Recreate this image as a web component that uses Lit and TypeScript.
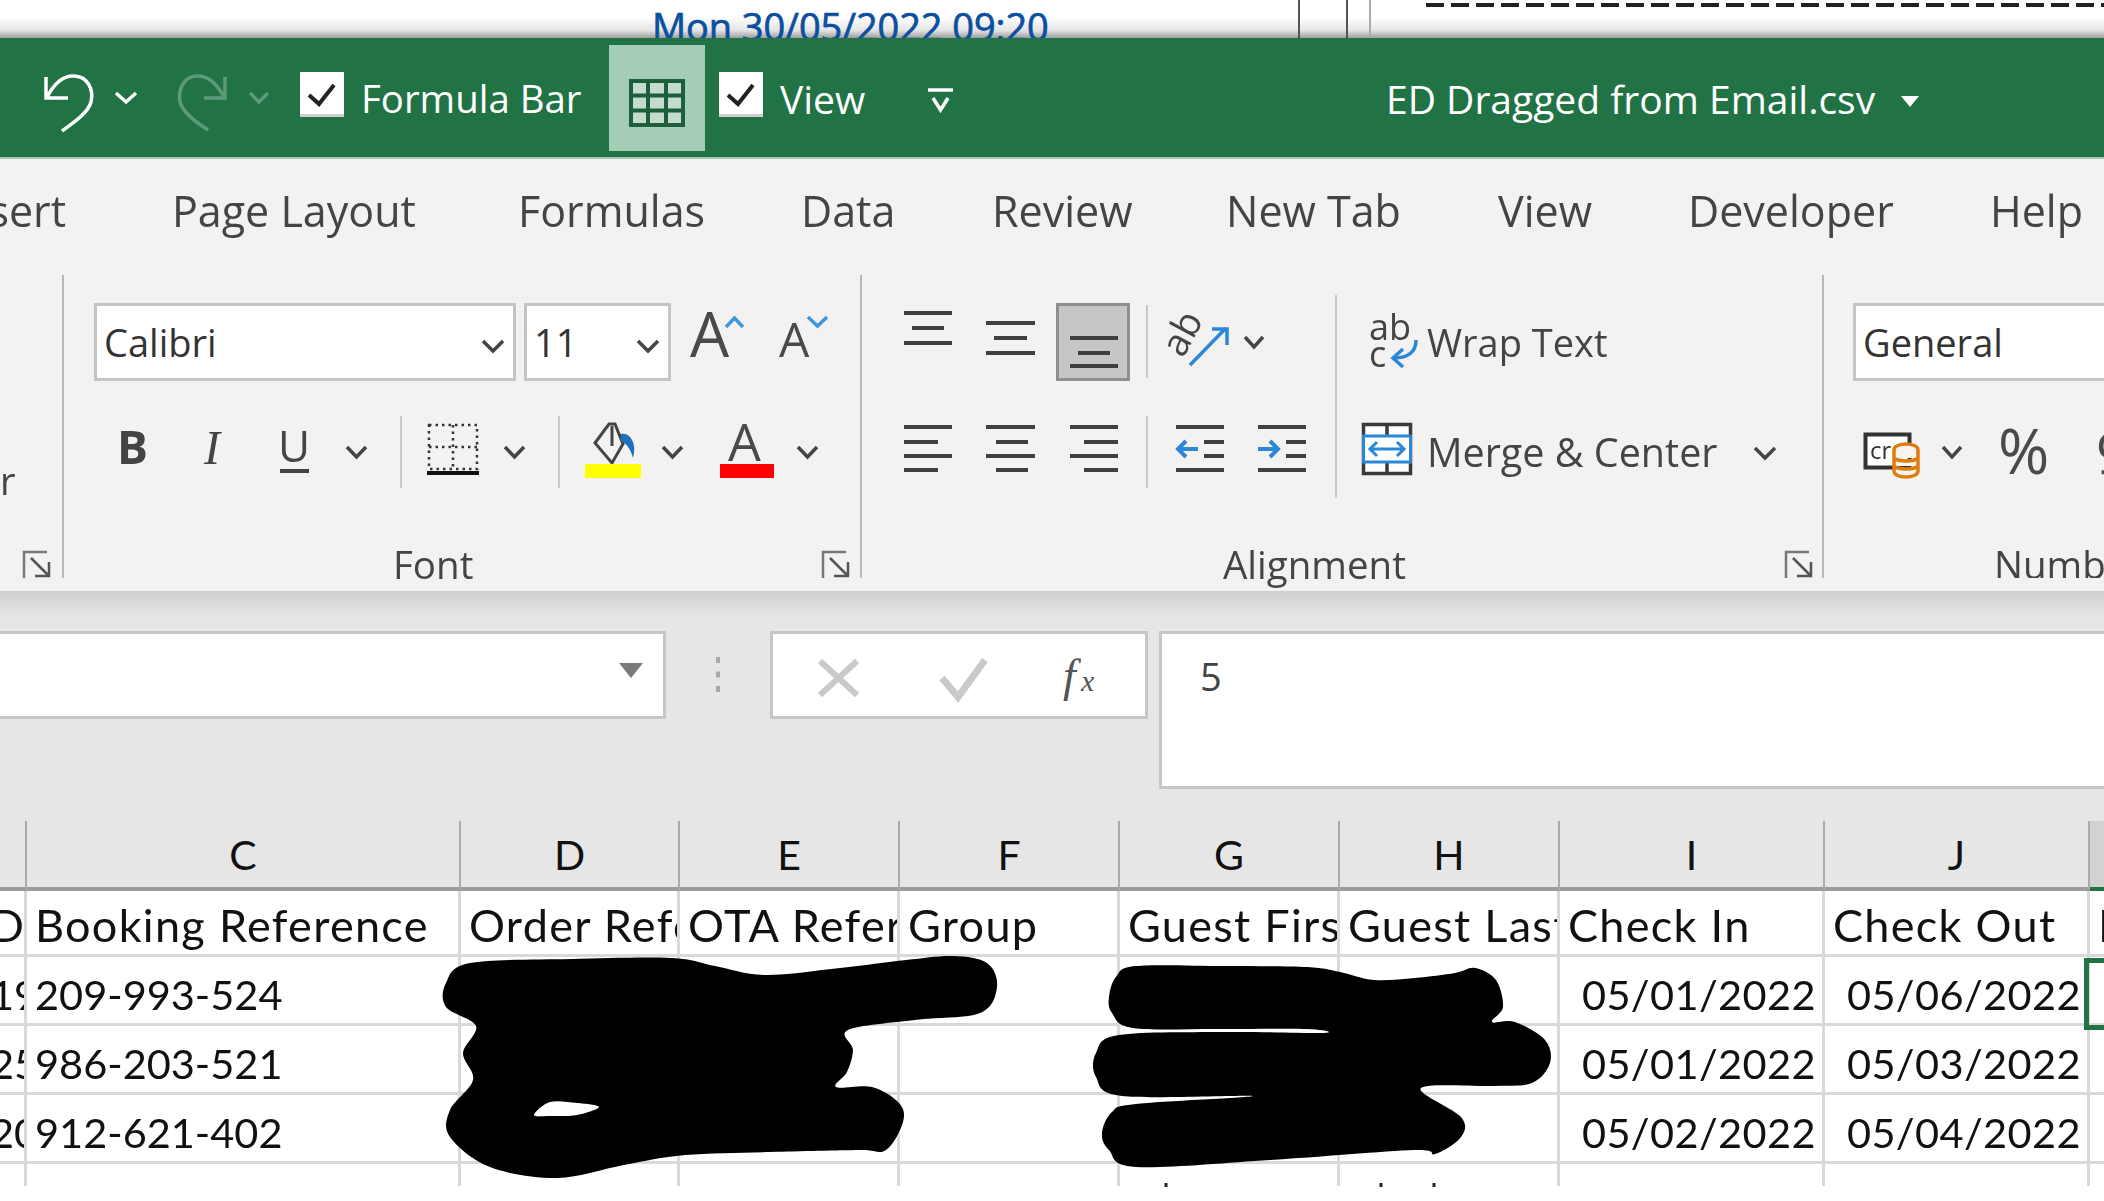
import { LitElement, html, css, svg, TemplateResult } from "lit";
import { customElement } from "lit/decorators.js";

type Slot = { x: number; w: number; t: unknown; c?: string };

const row = (origin: number, items: Slot[], cls = "") => {
  let end = origin;
  return html`<div class="row ${cls}">${items.map((i) => {
    const m = i.x - end;
    end = i.x + i.w;
    return html`<div class="slot ${i.c ?? ""}" style="margin-left:${m}px;width:${i.w}px">${i.t}</div>`;
  })}</div>`;
};

const ic = (x: number, w: number, y: number, h: number, c: unknown) =>
  svg`<svg class="ic" width=${w} height=${h} viewBox="${x} ${y} ${w} ${h}">${c}</svg>`;

const R1 = [303, 78] as const;
const R2 = [416, 72] as const;
const R3 = [544, 40] as const;

const chev = (a: number, b: number, y1: number, y2: number, col = "#444", sw = 3.5) =>
  svg`<polyline points="${a},${y1} ${(a + b) / 2},${y2} ${b},${y1}" fill="none" stroke=${col} stroke-width=${sw}/>`;

const lines = (ls: [number, number, number][], col = "#3f3f3f") =>
  ls.map(([a, b, y]) => svg`<line x1=${a} x2=${b} y1=${y} y2=${y} stroke=${col} stroke-width="4"/>`);

const sep = (x: number, y1: number, y2: number) =>
  svg`<line x1=${x} x2=${x} y1=${y1} y2=${y2} stroke="#c8c8c8" stroke-width="2"/>`;

const launcher = (x: number) => svg`
  <path d="M${x + 1} 578V552H${x + 24}" fill="none" stroke="#777" stroke-width="2.5"/>
  <path d="M${x + 8} 558L${x + 26} 576M${x + 26} 562V576H${x + 12}" fill="none" stroke="#555" stroke-width="2.5"/>`;

const check = (dx: number) => svg`
  <rect x=${300 + dx} y="72" width="44" height="45" fill="#fff"/>
  <rect x=${300 + dx} y="114" width="44" height="3" fill="#cfcfcf"/>
  <polyline points="${309 + dx},95 ${319 + dx},104 ${334 + dx},85" fill="none" stroke="#222" stroke-width="4"/>`;

const comboChev = () => ic(0, 22, 0, 14, chev(1, 21, 2, 12, "#444", 3.5));

/* closed Catmull-Rom spline through page coordinates */
const blob = (p: [number, number][]) => {
  const n = p.length;
  let d = `M${p[0][0]} ${p[0][1]}`;
  for (let i = 0; i < n; i++) {
    const a = p[(i - 1 + n) % n], b = p[i], c = p[(i + 1) % n], e = p[(i + 2) % n];
    const k = 6;
    d += `C${b[0] + (c[0] - a[0]) / k} ${b[1] + (c[1] - a[1]) / k} ${c[0] - (e[0] - b[0]) / k} ${c[1] - (e[1] - b[1]) / k} ${c[0]} ${c[1]}`;
  }
  return d + "Z";
};

const blobA: [number, number][] = [[470,963],[571,959],[671,958],[715,966],[765,975],[840,968],[906,960],[953,956],[987,963],[997,987],[980,1013],[915,1020],[848,1030],[853,1050],[847,1072],[836,1087],[872,1087],[899,1103],[903,1122],[886,1150],[859,1150],[770,1152],[685,1155],[624,1165],[557,1178],[490,1167],[450,1137],[450,1110],[473,1080],[463,1053],[476,1026],[446,1007],[446,983]];
const holeA: [number, number][] = [[534,1115],[550,1102],[577,1103],[599,1107],[577,1115],[550,1116]];
const blobB: [number, number][] = [[1136,966],[1225,966],[1307,967],[1340,972],[1374,980],[1415,978],[1455,973],[1475,968],[1496,980],[1503,1007],[1492,1022],[1515,1022],[1545,1040],[1550,1063],[1532,1083],[1495,1086],[1421,1088],[1461,1117],[1461,1137],[1435,1154],[1414,1150],[1270,1160],[1136,1167],[1109,1150],[1102,1133],[1112,1112],[1136,1104],[1253,1096],[1122,1096],[1096,1077],[1096,1053],[1119,1035],[1230,1032],[1324,1033],[1307,1029],[1220,1029],[1133,1028],[1112,1013],[1109,997],[1116,977]];

const cols = ["C", "D", "E", "F", "G", "H", "I", "J"];
const heads = ["Booking Reference", "Order Reference", "OTA Reference", "Group", "Guest First Name", "Guest Last Name", "Check In", "Check Out"];
const data = [
  ["19", "209-993-524", "05/01/2022", "05/06/2022"],
  ["25", "986-203-521", "05/01/2022", "05/03/2022"],
  ["20", "912-621-402", "05/02/2022", "05/04/2022"],
  ["", "", "05/03/2022", "05/05/2022"],
];

@customElement("app-root")
export class AppRoot extends LitElement {
  static styles = css`
    :host { display: block; position: relative; width: 2104px; height: 1201px; overflow: hidden; background: #fff; font-family: "Open Sans", "Noto Sans", sans-serif; color: #444; }
    .soft { filter: blur(0.7px); }
    .row { display: flex; align-items: center; }
    .slot { flex: none; display: flex; align-items: center; white-space: nowrap; }
    .ic { display: block; overflow: visible; flex: none; }
    .strip { height: 38px; display: flex; position: relative; overflow: hidden; background: linear-gradient(#fff 0, #fff 45%, #e4e4e4 80%, #9e9e9e 100%); }
    .stamp { flex: none; width: 398px; margin-left: 652px; margin-top: 4px; font: 38px/44px "Open Sans", sans-serif; color: #0b4fa0; -webkit-text-stroke: 0.7px #0b4fa0; letter-spacing: -0.1px; white-space: nowrap; }
    .v1 { flex: none; width: 2px; background: #555; }
    .dash { height: 4px; flex: 1; margin-top: 3px; background: repeating-linear-gradient(90deg, #222 0 18px, transparent 18px 25px); }
    .title { height: 121px; box-sizing: border-box; padding-top: 7px; background: #217346; border-bottom: 2px solid #a9c9b6; color: #fff; font-size: 39px; }
    .fbar { font-size: 38.4px; }
    .sel { background: #a3cdb5; height: 106px; }
    .ribbon { background: #f3f2f1; height: 432px; font-size: 38px; }
    .tabs { height: 102px; font-size: 43px; }
    .right { justify-content: flex-end; }
    .groups { display: flex; margin-top: 14px; }
    .group { height: 303px; box-sizing: border-box; border-right: 2px solid #b9b9b9; flex: none; overflow: visible; }
    .g1 { width: 64px; } .g2 { width: 798px; } .g3 { width: 962px; } .g4 { width: 280px; border-right: 0; overflow: hidden; }
    .r1 { height: 78px; margin-top: 28px; }
    .r2 { height: 72px; margin-top: 35px; }
    .r3 { height: 40px; margin-top: 56px; font-size: 38.5px; }
    .box { height: 78px; box-sizing: border-box; background: #fff; border: 3px solid #c4c4c4; padding: 0 9px 0 7px; color: #333; justify-content: space-between; }
    .box .ic { margin-top: 8px; }
    .box.open { border-right: 0; }
    .merge { font-size: 39.5px; }
    .fx { height: 230px; box-sizing: border-box; padding-top: 40px; background: linear-gradient(#cfcfcf 0, #e6e6e6 26px); align-items: flex-start; }
    .fbox { height: 88px; box-sizing: border-box; background: #fff; border: 3px solid #c6c6c6; }
    .fin { height: 158px; box-sizing: border-box; background: #fff; border: 3px solid #c6c6c6; border-right: 0; padding: 17px 0 0 38px; align-items: flex-start; font-size: 38px; line-height: 50px; color: #444; }
    .sheet { height: 365px; overflow: hidden; font-family: Lato, "Open Sans", sans-serif; color: #111; }
    .grid { display: grid; grid-template-columns: 27px 434px 219px 220px 220px 220px 220px 265px 265px 14px; }
    .hd { height: 70px; box-sizing: border-box; background: #e6e6e6; border-right: 2px solid #ababab; border-bottom: 4px solid #9c9c9c; display: flex; align-items: center; justify-content: center; font-size: 41px; padding-top: 1px; }
    .hd.last { background: #d2d2d2; border-right: 0; border-bottom-color: #217346; }
    .c { height: 69px; box-sizing: border-box; border-right: 3px solid #d9d9d9; border-bottom: 3px solid #d9d9d9; font-size: 45px; letter-spacing: 1.3px; line-height: 58px; padding: 0 0 0 8px; white-space: nowrap; overflow: hidden; display: flex; align-items: flex-end; }
    .n { font-size: 41.5px; letter-spacing: 0; }
    .first { height: 66px; }
    .num { justify-content: flex-end; padding: 0 6px 0 0; letter-spacing: 0.4px; }
    .stub { padding: 0; }
    .stub span { margin-left: -10px; }
    .stubr { justify-content: flex-end; letter-spacing: 0; }
    .end { border-right: 0; }
    .active { position: absolute; left: 2084px; top: 958px; width: 40px; height: 72px; box-sizing: border-box; border: 5px solid #217346; }
    .ink { position: absolute; left: 0; top: 0; }
  `;

  render(): TemplateResult {
    const [y1, h1] = R1, [y2, h2] = R2, [y3, h3] = R3;
    return html`
    <div class="soft">
      <div class="strip">
        <div class="stamp">Mon 30/05/2022 09:20</div>
        <div class="v1" style="margin-left:${1298 - 1050}px"></div>
        <div class="v1" style="margin-left:46px"></div>
        <div class="v1" style="margin-left:21px;background:#aaa"></div>
        <div class="dash" style="margin-left:55px"></div>
      </div>

      <div class="title">
        ${row(0, [
          { x: 44, w: 52, t: ic(44, 52, 45, 106, svg`<path d="M46 77V98H68M47 97C55 82 65 75 75 76C88 77 94 90 91 102C88 113 74 122 62 131" fill="none" stroke="#fff" stroke-width="3.5"/>`) },
          { x: 114, w: 24, t: ic(114, 24, 45, 106, chev(116, 136, 93, 102, "#fff")) },
          { x: 178, w: 52, t: ic(178, 52, 45, 106, svg`<path d="M225 77V98H204M224 97C216 82 206 75 196 76C183 77 178 90 180 102C183 113 196 122 208 130" fill="none" stroke="#5d9a7b" stroke-width="3.5"/>`) },
          { x: 248, w: 24, t: ic(248, 24, 45, 106, chev(250, 268, 93, 102, "#5d9a7b")) },
          { x: 300, w: 44, t: ic(300, 44, 45, 106, check(0)) },
          { x: 361, w: 230, c: "fbar", t: "Formula Bar" },
          { x: 609, w: 96, c: "sel", t: ic(609, 96, 45, 106, svg`
            <rect x="631" y="81" width="52" height="44" fill="#c3dccd" stroke="#1d5f3b" stroke-width="4"/>
            <path d="M648 80V126M666 80V126M630 95.5H684M630 110.5H684" stroke="#1d5f3b" stroke-width="4"/>`) },
          { x: 719, w: 44, t: ic(719, 44, 45, 106, check(419)) },
          { x: 780, w: 100, t: "View" },
          { x: 928, w: 26, t: ic(928, 26, 45, 106, svg`<path d="M928 90H953" stroke="#fff" stroke-width="3.5"/>${chev(933, 948, 98, 110, "#fff", 3.5)}`) },
          { x: 1386, w: 500, t: "ED Dragged from Email.csv" },
          { x: 1901, w: 18, t: ic(1901, 18, 45, 106, svg`<path d="M1901 96H1919L1910 107Z" fill="#fff"/>`) },
        ])}
      </div>

      <div class="ribbon">
        ${row(0, [
          { x: 0, w: 66, c: "right", t: "sert" },
          { x: 172, w: 260, t: "Page Layout" },
          { x: 518, w: 200, t: "Formulas" },
          { x: 801, w: 110, t: "Data" },
          { x: 992, w: 150, t: "Review" },
          { x: 1226, w: 190, t: "New Tab" },
          { x: 1498, w: 100, t: "View" },
          { x: 1688, w: 220, t: "Developer" },
          { x: 1990, w: 90, t: "Help" },
        ], "tabs")}
        <div class="groups">
          <div class="group g1">
            ${row(0, [{ x: 0, w: 12, t: "" }], "r1")}
            ${row(0, [{ x: 0, w: 14, t: ic(0, 14, y2, h2, svg`<text x="0" y="495" font-size="38" fill="#444" font-family="Open Sans">r</text>`) }], "r2")}
            ${row(0, [{ x: 22, w: 32, t: ic(22, 32, y3, h3, launcher(23)) }], "r3")}
          </div>

          <div class="group g2">
            ${row(63, [
              { x: 93, w: 422, c: "box", t: html`<span>Calibri</span>${comboChev()}` },
              { x: 523, w: 147, c: "box", t: html`<span>11</span>${comboChev()}` },
              { x: 692, w: 52, t: ic(692, 52, y1, h1, svg`
                <text x="689" y="357" font-size="62" fill="#4a4a4a" font-family="Open Sans">A</text>
                ${chev(725, 742, 327, 318, "#3f97d8")}`) },
              { x: 780, w: 48, t: ic(780, 48, y1, h1, svg`
                <text x="778" y="357" font-size="48" fill="#4a4a4a" font-family="Open Sans">A</text>
                ${chev(807, 826, 317, 326, "#3f97d8")}`) },
            ], "r1")}
            ${row(63, [
              { x: 119, w: 26, t: ic(119, 26, y2, h2, svg`<text x="116" y="464" font-size="46" font-weight="700" fill="#444" font-family="Open Sans">B</text>`) },
              { x: 204, w: 24, t: ic(204, 24, y2, h2, svg`<text x="203" y="464" font-size="48" font-style="italic" fill="#444" font-family="Liberation Serif">I</text>`) },
              { x: 278, w: 32, t: ic(278, 32, y2, h2, svg`
                <text x="277" y="462" font-size="44" fill="#444" font-family="Open Sans">U</text>
                <path d="M279 471H308" stroke="#444" stroke-width="4"/>`) },
              { x: 345, w: 22, t: ic(345, 22, y2, h2, chev(346, 365, 447, 457)) },
              { x: 399, w: 2, t: ic(399, 2, y2, h2, sep(400, 416, 488)) },
              { x: 426, w: 52, t: ic(426, 52, y2, h2, svg`
                <rect x="428" y="425" width="48" height="44" fill="none" stroke="#333" stroke-width="2.5" stroke-dasharray="2.5 4"/>
                <path d="M452 425V469M428 447H476" stroke="#333" stroke-width="2.5" stroke-dasharray="2.5 4"/>
                <path d="M426 473H478" stroke="#111" stroke-width="4"/>`) },
              { x: 503, w: 22, t: ic(503, 22, y2, h2, chev(504, 523, 447, 457)) },
              { x: 557, w: 2, t: ic(557, 2, y2, h2, sep(558, 416, 488)) },
              { x: 584, w: 56, t: ic(584, 56, y2, h2, svg`
                <path d="M594 443L608 424L614 424L622 444L611 463Z" fill="none" stroke="#444" stroke-width="3"/>
                <path d="M611 426V446" stroke="#444" stroke-width="3"/>
                <path d="M620 434C630 432 636 445 632 458C630 450 626 444 620 441Z" fill="#1f6fbf"/>
                <rect x="584" y="464" width="56" height="14" fill="#ffff00"/>`) },
              { x: 661, w: 22, t: ic(661, 22, y2, h2, chev(662, 681, 447, 457)) },
              { x: 719, w: 54, t: ic(719, 54, y2, h2, svg`
                <text x="727" y="461" font-size="52" fill="#4a4a4a" font-family="Open Sans">A</text>
                <rect x="719" y="464" width="54" height="14" fill="#f00"/>`) },
              { x: 796, w: 22, t: ic(796, 22, y2, h2, chev(797, 816, 447, 457)) },
            ], "r2")}
            ${row(63, [
              { x: 392, w: 100, t: "Font" },
              { x: 821, w: 30, t: ic(821, 30, y3, h3, launcher(821)) },
            ], "r3")}
          </div>

          <div class="group g3">
            ${row(861 + 1, [
              { x: 904, w: 48, t: ic(904, 48, y1, h1, lines([[904, 952, 313], [912, 944, 328], [904, 952, 343]])) },
              { x: 986, w: 49, t: ic(986, 49, y1, h1, lines([[986, 1035, 323], [994, 1027, 338], [986, 1035, 353]])) },
              { x: 1056, w: 74, t: ic(1056, 74, y1, h1, svg`
                <rect x="1057.5" y="304.5" width="71" height="75" fill="#c6c6c6" stroke="#8f8f8f" stroke-width="3"/>
                ${lines([[1070, 1118, 338], [1078, 1110, 353], [1070, 1118, 366]])}`) },
              { x: 1146, w: 2, t: ic(1146, 2, y1, h1, sep(1147, 305, 378)) },
              { x: 1172, w: 58, t: ic(1172, 58, y1, h1, svg`
                <text transform="translate(1183 359) rotate(-62)" font-size="38" fill="#444" font-family="Open Sans">ab</text>
                <path d="M1190 365L1226 328M1212 329H1227V345" fill="none" stroke="#2b88d8" stroke-width="3.5"/>`) },
              { x: 1244, w: 20, t: ic(1244, 20, y1, h1, chev(1245, 1263, 337, 347)) },
              { x: 1335, w: 2, t: ic(1335, 2, y1, h1, sep(1336, 295, 498)) },
              { x: 1370, w: 50, t: ic(1370, 50, y1, h1, svg`
                <text x="1369" y="340" font-size="36" fill="#444" font-family="Open Sans">ab</text>
                <text x="1369" y="367" font-size="36" fill="#444" font-family="Open Sans">c</text>
                <path d="M1416 340C1416 352 1408 358 1394 358M1403 349L1393 358L1403 367" fill="none" stroke="#2b88d8" stroke-width="3.5"/>`) },
              { x: 1427, w: 200, t: "Wrap Text" },
            ], "r1")}
            ${row(861 + 1, [
              { x: 904, w: 48, t: ic(904, 48, y2, h2, lines([[904, 952, 427], [904, 938, 442], [904, 952, 456], [904, 938, 470]])) },
              { x: 986, w: 49, t: ic(986, 49, y2, h2, lines([[986, 1035, 427], [996, 1028, 442], [986, 1035, 456], [996, 1028, 470]])) },
              { x: 1070, w: 48, t: ic(1070, 48, y2, h2, lines([[1070, 1118, 427], [1084, 1118, 442], [1070, 1118, 456], [1084, 1118, 470]])) },
              { x: 1146, w: 2, t: ic(1146, 2, y2, h2, sep(1147, 416, 488)) },
              { x: 1176, w: 48, t: ic(1176, 48, y2, h2, svg`
                ${lines([[1176, 1224, 427], [1204, 1224, 442], [1204, 1224, 456], [1176, 1224, 470]])}
                <path d="M1198 449H1178M1186 441L1178 449L1186 457" fill="none" stroke="#2b88d8" stroke-width="4"/>`) },
              { x: 1258, w: 48, t: ic(1258, 48, y2, h2, svg`
                ${lines([[1258, 1306, 427], [1286, 1306, 442], [1286, 1306, 456], [1258, 1306, 470]])}
                <path d="M1258 449H1278M1270 441L1278 449L1270 457" fill="none" stroke="#2b88d8" stroke-width="4"/>`) },
              { x: 1362, w: 50, t: ic(1362, 50, y2, h2, svg`
                <rect x="1363.5" y="424.5" width="47" height="49" fill="#fff" stroke="#3a3a3a" stroke-width="3.5"/>
                <path d="M1387 424V436M1387 462V474" stroke="#3a3a3a" stroke-width="3.5"/>
                <rect x="1363.5" y="436" width="47" height="26" fill="#fff" stroke="#2b88d8" stroke-width="3"/>
                <path d="M1370 449H1404M1377 442L1370 449L1377 456M1397 442L1404 449L1397 456" fill="none" stroke="#2b88d8" stroke-width="3"/>`) },
              { x: 1427, w: 310, c: "merge", t: "Merge & Center" },
              { x: 1754, w: 22, t: ic(1754, 22, y2, h2, chev(1755, 1775, 448, 458)) },
            ], "r2")}
            ${row(861 + 1, [
              { x: 1223, w: 210, t: "Alignment" },
              { x: 1784, w: 30, t: ic(1784, 30, y3, h3, launcher(1785)) },
            ], "r3")}
          </div>

          <div class="group g4">
            ${row(1824, [{ x: 1853, w: 251, c: "box open", t: "General" }], "r1")}
            ${row(1824, [
              { x: 1864, w: 56, t: ic(1864, 56, y2, h2, svg`
                <rect x="1865.5" y="434.5" width="44" height="33" fill="#fff" stroke="#333" stroke-width="4"/>
                <text x="1870" y="459" font-size="24" fill="#333" font-family="Open Sans">cr</text>
                <path d="M1894 450C1894 442 1918 442 1918 450V471C1918 479 1894 479 1894 471ZM1894 458C1898 462 1914 462 1918 458M1894 466C1898 470 1914 470 1918 466" fill="#f7f4ee" stroke="#e07b0f" stroke-width="3.5"/>`) },
              { x: 1942, w: 20, t: ic(1942, 20, y2, h2, chev(1943, 1961, 447, 457)) },
              { x: 2000, w: 56, t: ic(2000, 56, y2, h2, svg`<text x="1998" y="474" font-size="62" fill="#4a4a4a" font-family="Open Sans">%</text>`) },
              { x: 2096, w: 8, t: ic(2096, 8, y2, h2, svg`<text x="2096" y="474" font-size="56" fill="#4a4a4a" font-family="Open Sans">9</text>`) },
            ], "r2")}
            ${row(1824, [{ x: 1994, w: 110, t: "Number" }], "r3")}
          </div>
        </div>
      </div>

      ${row(0, [
        { x: -10, w: 676, c: "fbox", t: html`<span></span>` },
        { x: 666, w: 0, t: ic(619, 24, 631, 86, svg`<path d="M619 663H643L631 678Z" fill="#7a7a7a" transform="translate(-47 0)"/>`) },
        { x: 716, w: 4, t: ic(716, 4, 631, 86, svg`<path d="M718 657V692" stroke="#a8a8a8" stroke-width="4" stroke-dasharray="6 8.5"/>`) },
        { x: 770, w: 378, c: "fbox", t: ic(770, 378, 631, 82, svg`
          <path d="M817 658L854 692M854 658L817 692" stroke="#c9c9c9" stroke-width="6"/>
          <path d="M939 675L955 694L982 657" fill="none" stroke="#c9c9c9" stroke-width="7"/>
          <text x="1060" y="688" font-size="46" font-style="italic" fill="#555" font-family="Liberation Serif">f</text>
          <text x="1078" y="688" font-size="30" font-style="italic" fill="#555" font-family="Liberation Serif">x</text>`) },
        { x: 1159, w: 945, c: "fin", t: "5" },
      ], "fx")}

      <div class="sheet">
        <div class="grid">
          <div class="hd"></div>
          ${cols.map((c) => html`<div class="hd">${c}</div>`)}
          <div class="hd last"></div>

          <div class="c first stub stubr">D</div>
          ${heads.map((h) => html`<div class="c first">${h}</div>`)}
          <div class="c first end">Pax</div>

          ${data.map((r) => html`
            <div class="c n stub"><span>${r[0]}</span></div>
            <div class="c n">${r[1]}</div>
            <div class="c"></div><div class="c"></div><div class="c"></div><div class="c"></div><div class="c"></div>
            <div class="c n num">${r[2]}</div>
            <div class="c n num">${r[3]}</div>
            <div class="c end"></div>
          `)}
        </div>
      </div>
    </div>

    <div class="active"></div>
    <svg class="ink" width="2104" height="1201" viewBox="0 0 2104 1201">
      <path d="${blob(blobA)}${blob(holeA)}" fill="#000" fill-rule="evenodd"/>
      <path d="${blob(blobB)}" fill="#000"/>
      <path d="M1166 1183V1187M1381 1183V1187M1434 1183V1187" stroke="#222" stroke-width="3"/>
      <rect x="0" y="1187" width="2104" height="14" fill="#fff"/>
    </svg>`;
  }
}
